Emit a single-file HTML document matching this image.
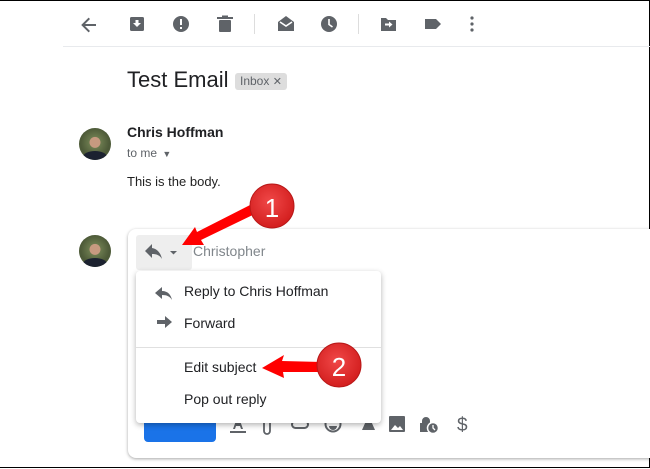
<!DOCTYPE html>
<html><head><meta charset="utf-8"><style>
*{margin:0;padding:0;box-sizing:border-box}
body{width:650px;height:468px;overflow:hidden;background:#fff;font-family:"Liberation Sans",Arial,sans-serif;position:relative;border:1px solid #000;border-left:none}
.a{position:absolute}
.t{position:absolute;white-space:nowrap}
</style></head><body>
<svg class="a" style="left:0;top:0" width="650" height="50" fill="#5f6368">
<path d="M96 23H85l5-5-1.4-1.4L81.2 24l7.4 7.4L90 30l-5-5h11z"/>
<rect x="130" y="16" width="14" height="14" rx="1.5"/><path d="M133 22h8l-4 4z" fill="#fff"/><rect x="135.5" y="19" width="3" height="4" fill="#fff"/>
<circle cx="181" cy="23" r="8"/><rect x="180" y="18" width="2" height="6" fill="#fff"/><rect x="180" y="26" width="2" height="2" fill="#fff"/>
<rect x="219" y="19" width="12" height="12" rx="1"/><rect x="217" y="16" width="16" height="2"/><rect x="222" y="14.5" width="6" height="2"/>
<rect x="254" y="13" width="1" height="20" fill="#ddd"/>
<path d="M278 21l8-6 8 6v9h-16z"/><path d="M280 21l6 4 6-4" stroke="#fff" stroke-width="1.6" fill="none"/>
<circle cx="329" cy="23" r="8"/><path d="M329 18v5.5l3.5 2.5" stroke="#fff" stroke-width="1.6" fill="none"/>
<rect x="358" y="13" width="1" height="20" fill="#ddd"/>
<path d="M381 17h5l2 2h8v11h-15z"/><path d="M385 22.5h4v-2l3.5 3-3.5 3v-2h-4z" fill="#fff"/>
<path d="M425 18h11l5 5-5 5h-11z" />
<circle cx="472" cy="17" r="1.6"/><circle cx="472" cy="23" r="1.6"/><circle cx="472" cy="29" r="1.6"/>
<rect x="63" y="45" width="587" height="1" fill="#e8eaed"/>
</svg>
<div class="t" style="left:127px;top:66px;font-size:22px;color:#202124">Test Email</div>
<div class="a" style="left:235px;top:72px;width:52px;height:17px;background:#ddd;border-radius:3px;font-size:12px;color:#5f6368;padding:1px 0 0 5px">Inbox <span style="font-size:11px">✕</span></div>
<div class="a" style="left:79px;top:127px;width:32px;height:32px;border-radius:50%;background:radial-gradient(circle at 50% 45%,#c79a80 0 22%,#6b7a4e 24%,#4d5a38 60%);overflow:hidden"><div style="position:absolute;left:4px;top:23px;width:24px;height:12px;background:#1c2230;border-radius:50% 50% 0 0"></div></div>
<div class="a" style="left:79px;top:234px;width:32px;height:32px;border-radius:50%;background:radial-gradient(circle at 50% 45%,#c79a80 0 22%,#6b7a4e 24%,#4d5a38 60%);overflow:hidden"><div style="position:absolute;left:4px;top:23px;width:24px;height:12px;background:#1c2230;border-radius:50% 50% 0 0"></div></div>
<div class="t" style="left:127px;top:123px;font-size:14px;font-weight:bold;color:#202124">Chris Hoffman</div>
<div class="t" style="left:127px;top:145px;font-size:12px;color:#5f6368">to me <span style="font-size:9px;margin-left:2px">▼</span></div>
<div class="t" style="left:127px;top:173px;font-size:13px;color:#222">This is the body.</div>
<div class="a" style="left:128px;top:228px;width:540px;height:229px;border-radius:8px;box-shadow:0 1px 3px rgba(0,0,0,.35);background:#fff"></div>
<div class="a" style="left:136px;top:234px;width:56px;height:35px;background:#eee;border-radius:3px"></div>
<svg class="a" style="left:136px;top:234px" width="56" height="35" fill="#5f6368"><path d="M16 13v-4l-7 7 7 7v-4c5 0 8 1.5 10 5-1-5-4-10-10-11z"/><path d="M34 16h7l-3.5 3.5z"/></svg>
<div class="t" style="left:193px;top:242px;font-size:14px;color:#80868b">Christopher</div>
<div class="a" style="left:144px;top:408px;width:72px;height:33px;background:#1a73e8;border-radius:4px"></div>
<svg class="a" style="left:225px;top:410px" width="250" height="28" fill="#5f6368">
<path d="M8 18l4-11h2l4 11h-2l-1-3h-4l-1 3z"/><rect x="5" y="20" width="16" height="2"/>
<path d="M45 8v12a3 3 0 0 1-6 0V9" stroke="#5f6368" stroke-width="1.8" fill="none"/>
<rect x="67" y="10" width="16" height="7" rx="3.5" stroke="#5f6368" stroke-width="2" fill="none"/>
<circle cx="108" cy="13" r="7.5" stroke="#5f6368" stroke-width="2" fill="none"/><path d="M104 15h8a4 4 0 0 1-8 0z"/>
<path d="M137 19l4-9h5l4 9z"/>
<rect x="164" y="5" width="16" height="16" rx="1"/><path d="M166 19l4-5 3 3 2-2 3 4z" fill="#fff"/>
<path d="M197 12v-2a4 4 0 0 1 8 0v2h1v9h-11v-9z"/><circle cx="208" cy="17" r="5.5" fill="#5f6368" stroke="#fff" stroke-width="1.5"/><path d="M208 14v3l2 2" stroke="#fff" stroke-width="1.3" fill="none"/>
<text x="232" y="20" font-size="19" font-family="Liberation Sans" fill="#5f6368">$</text>
</svg>
<div class="a" style="left:136px;top:270px;width:245px;height:152px;background:#fff;border-radius:4px;box-shadow:0 2px 6px rgba(0,0,0,.3)"></div>
<svg class="a" style="left:150px;top:280px" width="30" height="55" fill="#5f6368"><path d="M12 10V6l-7 6 7 6v-4c5 0 8 1.5 10 5-1-5-4-9-10-9z"/><path d="M7 39h8v-4l7 6-7 6v-4H7z"/></svg>
<div class="t" style="left:184px;top:282px;font-size:14px;color:#202124">Reply to Chris Hoffman</div>
<div class="t" style="left:184px;top:314px;font-size:14px;color:#202124">Forward</div>
<div class="a" style="left:136px;top:346px;width:245px;height:1px;background:#e0e0e0"></div>
<div class="t" style="left:184px;top:358px;font-size:14px;color:#202124">Edit subject</div>
<div class="t" style="left:184px;top:390px;font-size:14px;color:#202124">Pop out reply</div>
<svg class="a" style="left:0;top:0" width="650" height="468">
<defs><radialGradient id="g" cx="45%" cy="40%" r="60%"><stop offset="0" stop-color="#f04848"/><stop offset="1" stop-color="#d31e1e"/></radialGradient></defs>
<path d="M262 198L197 231l-2-5-13 18 22 0-3-5 64-31z" fill="#f00"/>
<circle cx="272" cy="205" r="22" fill="url(#g)" stroke="#b81818" stroke-width="1"/>
<text x="272" y="216" text-anchor="middle" font-size="26" font-family="Liberation Sans" fill="#fff">1</text>
<path d="M322 361l-40-1 2-6-22 13 22 10-1-6 40 0z" fill="#f00"/>
<circle cx="339" cy="364" r="22" fill="url(#g)" stroke="#b81818" stroke-width="1"/>
<text x="339" y="375" text-anchor="middle" font-size="26" font-family="Liberation Sans" fill="#fff">2</text>
</svg>
</body></html>
